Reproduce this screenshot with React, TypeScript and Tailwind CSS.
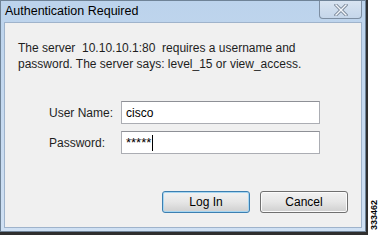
import React from 'react';

// Windows 7-style "Authentication Required" dialog
function CloseGlyph() {
    return (
        <svg width="14" height="12" viewBox="0 0 14 12">
            <path d="M2 1 L12 11 M12 1 L2 11" stroke="#7c8a9b" strokeWidth="3.2" strokeLinecap="square" />
            <path d="M2 1 L12 11 M12 1 L2 11" stroke="#f4f7fb" strokeWidth="1.4" strokeLinecap="square" />
        </svg>
    );
}

function Field({ label, children }: { label: string; children: React.ReactNode }) {
    return (
        <div className="flex items-center">
            <span className="w-[72px] text-[12px] text-[#1e1e1e]">{label}</span>
            <div className="flex h-[23px] w-[199px] items-center border border-[#abadb3] border-t-[#8e9096] bg-white px-[4px] text-[12px] text-black">
                {children}
            </div>
        </div>
    );
}

export default function App() {
    return (
        <div
            className="flex h-[236px] w-[380px] bg-white"
            style={{ fontFamily: '"Liberation Sans", Arial, sans-serif' }}
        >
            <div className="flex h-[235px] w-[368px] flex-col border-b-[3px] border-r-2 border-[#2f2f2f]">
                <div className="flex h-full flex-col border border-[#6f8397] bg-gradient-to-b from-[#bcd3ec] to-[#cfe0f3]">
                    <div className="flex h-[21px] items-start justify-between">
                        <span className="pl-[4px] pt-[4px] text-[12.5px] leading-none text-black">Authentication Required</span>
                        <div className="mr-[3px] flex h-[18px] w-[43px] items-center justify-center rounded-b-[4px] border border-t-0 border-[#7d8ea2] bg-gradient-to-b from-[#d8e4f1] to-[#c5d6ea]">
                            <CloseGlyph />
                        </div>
                    </div>
                    <div className="mx-[3px] mb-[3px] flex flex-1 flex-col border border-[#9fb3cb] bg-[#f0f0f0] pl-[13px] pt-[17px]">
                        <p className="text-[12px] leading-[16px] text-[#1e1e1e] whitespace-pre">
                            {'The server  10.10.10.1:80  requires a username and\npassword. The server says: level_15 or view_access.'}
                        </p>
                        <div className="ml-[31px] mt-[29px] flex flex-col gap-[7px]">
                            <Field label="User Name:">cisco</Field>
                            <Field label="Password:">
                                <span className="text-[13px] leading-none">*****</span>
                                <span className="ml-[1px] h-[16px] w-px bg-black" />
                            </Field>
                        </div>
                        <div className="mr-[13px] mt-auto mb-[14px] flex justify-end gap-[10px]">
                            <button className="h-[22px] w-[88px] rounded-[3px] border border-[#3c7fb1] bg-gradient-to-b from-[#f2f2f2] via-[#e6e6e6] to-[#cfcfcf] text-[12px] text-black shadow-[inset_0_0_0_1px_#a7d6f1]">
                                Log In
                            </button>
                            <button className="h-[22px] w-[88px] rounded-[3px] border border-[#707070] bg-gradient-to-b from-[#f2f2f2] via-[#e6e6e6] to-[#cfcfcf] text-[12px] text-black shadow-[inset_0_0_0_1px_#fbfbfb]">
                                Cancel
                            </button>
                        </div>
                    </div>
                </div>
            </div>
            <div className="flex flex-1 items-end justify-center pb-[6px]">
                <span className="rotate-180 text-[9px] font-bold leading-none text-black [writing-mode:vertical-rl]">333462</span>
            </div>
        </div>
    );
}
